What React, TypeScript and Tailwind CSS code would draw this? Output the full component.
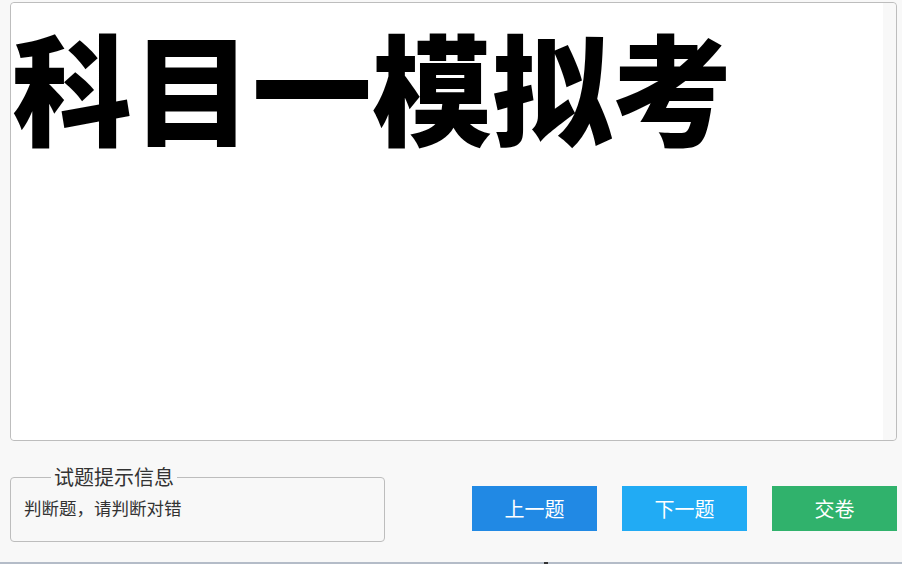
import React from "react";

const font = { fontFamily: '"Noto Sans CJK SC", "Microsoft YaHei", sans-serif' };

function NavButton({ label, color }: { label: string; color: string }) {
  return (
    <button className={`h-[45px] w-[125px] text-[20px] text-white ${color}`}>
      {label}
    </button>
  );
}

export default function App() {
  return (
    <div className="flex h-[564px] w-[902px] flex-col overflow-hidden bg-[#f8f8f8]" style={font}>
      <div className="ml-[10px] mr-[5px] mt-[2px] flex h-[439px] rounded-[4px] border border-[#bdbdbd]">
        <div className="flex-1 rounded-l-[4px] bg-white pt-[10px]">
          <h1 className="whitespace-nowrap pl-[1px] text-[120px] font-black leading-[1.2] text-black">
            科目一模拟考
          </h1>
        </div>
        <div className="w-[13px] rounded-r-[4px] bg-[#f8f8f8]" />
      </div>

      <div className="ml-[10px] mr-[5px] mt-[25px] flex items-start">
        <fieldset className="h-[76px] w-[375px] rounded-[4px] border border-[#bdbdbd] pl-[13px]">
          <legend className="ml-[27px] px-[3px] text-[20px] leading-[22px] text-[#333]">
            试题提示信息
          </legend>
          <p className="mt-[11px] text-[17.5px] leading-none text-[#333]">判断题，请判断对错</p>
        </fieldset>
        <div className="ml-auto mt-[20px] flex gap-[25px]">
          <NavButton label="上一题" color="bg-[#2189e4]" />
          <NavButton label="下一题" color="bg-[#21abf4]" />
          <NavButton label="交卷" color="bg-[#30b26c]" />
        </div>
      </div>

      <div className="mt-auto flex h-[2px] bg-[#b4bcc8]">
        <span className="ml-[544px] w-[4px] bg-[#333]" />
      </div>
    </div>
  );
}
